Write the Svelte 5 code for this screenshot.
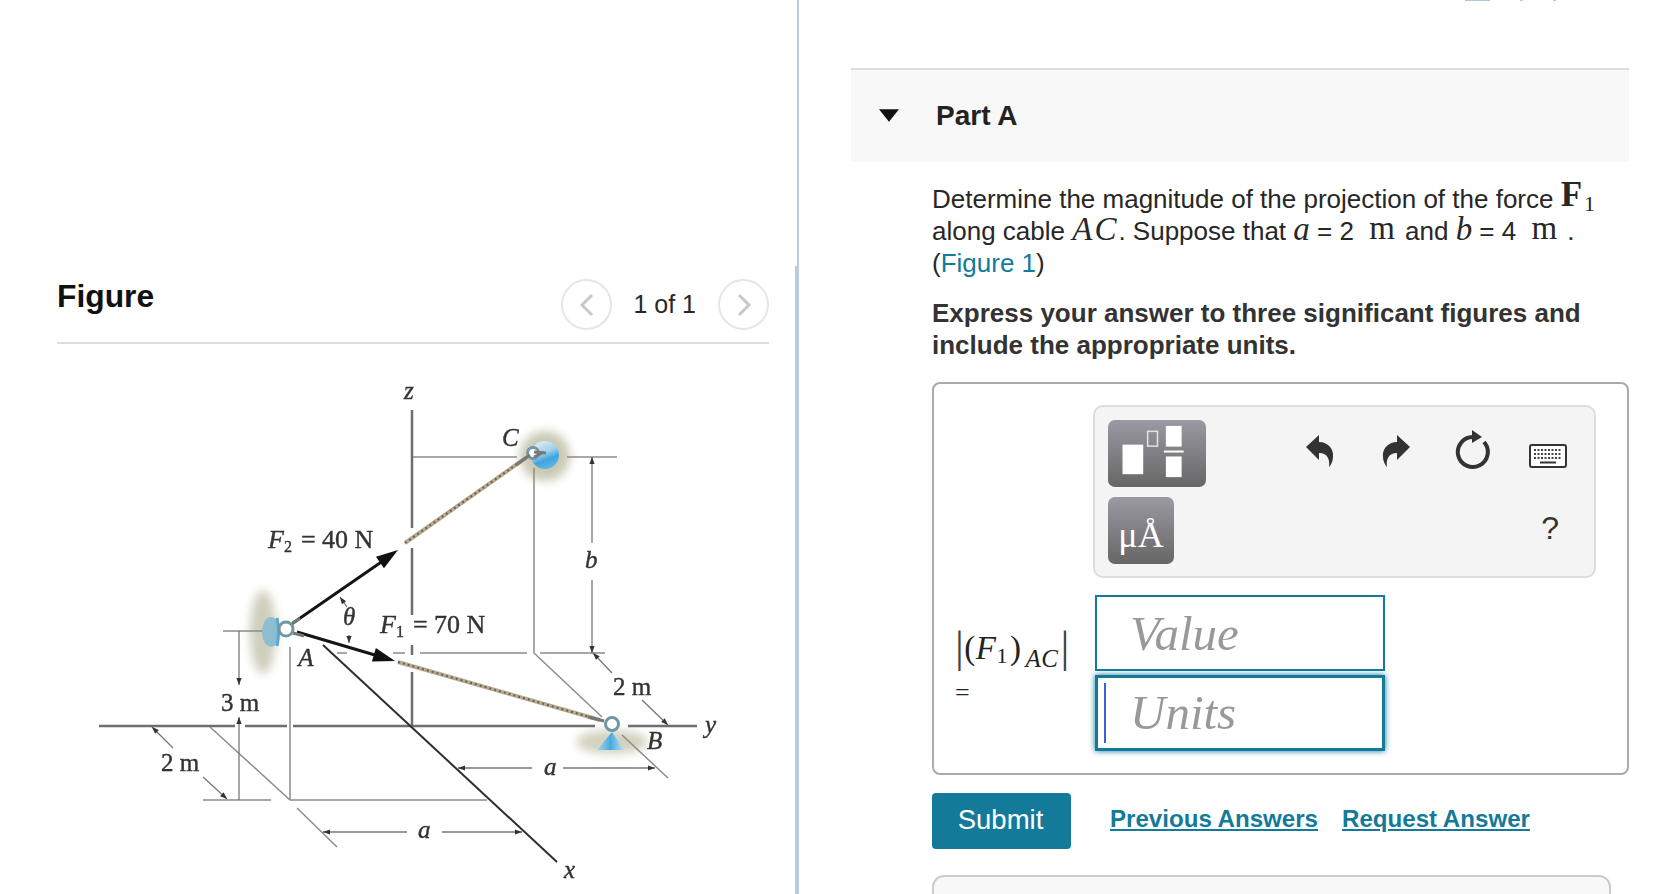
<script>
  const axis = [[412,410,412,528],[412,548,412,615],[412,645,412,655],[412,672,412,726],[99,726,235,726],[245,726,287,726],[293,726,595,726],[628,726,697,726]];
  const thin = [[412,457,517,457],[567,457,617,457],[534,468,534,653],[337,653,347,653],[393,653,405,653],[420,653,527,653],[540,653,605,653],[223,631,267,631],[290,647,290,800],[203,800,271,800],[290,800,487,800],[210,727,290,800],[297,808,337,847],[534,653,602,717],[622,735,668,778]];
  const dims = [[239,631,239,685],[239,800,239,717],[173,748,152,727],[203,777,227,799],[407,832,323,832],[442,832,522,832],[592,543,592,457],[592,580,592,653],[612,673,593,653],[642,700,668,725],[532,768,458,768],[563,768,655,768],[347,607,340,597],[349,635,349,643]];
  function head(l, len = 7, w = 2.6) {
    const [x1, y1, x2, y2] = l;
    const d = Math.hypot(x2 - x1, y2 - y1), ux = (x2 - x1) / d, uy = (y2 - y1) / d;
    const bx = x2 - ux * len, by = y2 - uy * len;
    return `${x2},${y2} ${bx - uy * w},${by + ux * w} ${bx + uy * w},${by - ux * w}`;
  }
  const seg = (l) => `M${l[0]} ${l[1]}L${l[2]} ${l[3]}`;
</script>

<div class="page">
  <section class="left">
    <header class="fig-head">
      <h2>Figure</h2>
      <nav class="pager">
        <span class="circle">
          <svg width="16" height="24" viewBox="0 0 16 24"><path d="M13 2 3 12l10 10" /></svg>
        </span>
        <span class="count">1 of 1</span>
        <span class="circle">
          <svg width="16" height="24" viewBox="0 0 16 24"><path d="m3 2 10 10L3 22" /></svg>
        </span>
      </nav>
    </header>
    <svg class="diagram" width="712" height="550" viewBox="57 344 712 550">
      <defs>
        <filter id="soft" x="-50%" y="-50%" width="200%" height="200%"><feGaussianBlur stdDeviation="5" /></filter>
        <linearGradient id="ball" x1="0.2" y1="0" x2="0.6" y2="1">
          <stop offset="0" stop-color="#e3f0f7" />
          <stop offset="0.45" stop-color="#9fd0ea" />
          <stop offset="0.7" stop-color="#3fa4dc" />
          <stop offset="1" stop-color="#63b6e2" />
        </linearGradient>
        <linearGradient id="cone" x1="0" y1="0" x2="1" y2="0">
          <stop offset="0" stop-color="#a9d6ee" />
          <stop offset="0.5" stop-color="#4aa9dc" />
          <stop offset="1" stop-color="#bfe0f2" />
        </linearGradient>
      </defs>
      <ellipse cx="263" cy="632" rx="13" ry="42" fill="#cfcfbe" filter="url(#soft)" />
      <circle cx="545" cy="456" r="25" fill="#c9c9b4" filter="url(#soft)" />
      <ellipse cx="612" cy="742" rx="36" ry="12" fill="#d2d2c0" filter="url(#soft)" />

      <path class="ln-thin" d={thin.map(seg).join('')} />
      <path class="ln-axis" d={axis.map(seg).join('')} />
      <path class="ln-x" d="M323 645 557 862" />
      <path class="ln-dim" d={dims.map(seg).join('')} />
      {#each dims as d}<polygon class="fill-dark" points={head(d)} />{/each}

      <path class="rope-a" d="M405 543 527 457M398 662 600 720" />
      <path class="rope-b" d="M405 543 527 457M398 662 600 720" />

      <path class="force" d="M293 623 390 556M297 632 385 658" />
      <polygon class="fill-black" points={head([293,623,398,550],22,7)} />
      <polygon class="fill-black" points={head([297,632,395,661],22,7)} />

      <ellipse cx="271" cy="632" rx="9" ry="15" fill="#8fbdd0" />
      <path d="M277 618q3 14 0 28" stroke="#5aa7cf" stroke-width="3" fill="none" />
      <circle cx="286" cy="629" r="7" class="ring" />
      <path class="shackle" d="M292 624 300 618M293 633 304 636" />

      <circle cx="545" cy="455" r="14" fill="url(#ball)" />
      <circle cx="533" cy="453" r="5.500" class="ring" />
      <path class="shackle" d="M516 465 530 455M534 452l12 1M534 457l10-5" />

      <circle cx="612" cy="724" r="6.500" class="ring" />
      <path class="shackle" d="M588 717 604 721" />
      <polygon points="612,732 597,750 624,750" fill="url(#cone)" />

      <text class="it" x="404" y="399">z</text>
      <text class="it" x="502" y="446">C</text>
      <text class="it" x="585" y="568">b</text>
      <text class="it" x="306" y="666" text-anchor="middle">A</text>
      <text class="it" x="647" y="749">B</text>
      <text class="it" x="705" y="733">y</text>
      <text class="it" x="564" y="878">x</text>
      <text class="it" x="418" y="838">a</text>
      <text class="it" x="544" y="775">a</text>
      <text class="it" x="343" y="625">θ</text>
      <text class="rm wide-t" x="268" y="548"><tspan class="itspan">F</tspan><tspan class="sub" dy="4">2</tspan><tspan dy="-4" dx="9">= 40 N</tspan></text>
      <text class="rm wide-t" x="380" y="633"><tspan class="itspan">F</tspan><tspan class="sub" dy="4">1</tspan><tspan dy="-4" dx="9">= 70 N</tspan></text>
      <text class="rm" x="240" y="711" text-anchor="middle">3 m</text>
      <text class="rm" x="180" y="771" text-anchor="middle">2 m</text>
      <text class="rm" x="632" y="695" text-anchor="middle">2 m</text>
    </svg>
  </section>

  <div class="divider"><i></i><b></b></div>

  <section class="right">
    <div class="topbits"><i class="w"></i><i></i><i></i></div>
    <div class="part">
      <svg width="20" height="13" viewBox="0 0 22 14"><polygon points="0,0 22,0 11,14" /></svg>
      <h3>Part A</h3>
    </div>
    <div class="body">
      <p class="q">Determine the magnitude of the projection of the force <span class="bf">F</span><span class="one">1</span><br />
        along cable <span class="ac">AC</span>. Suppose that <span class="mi">a</span> = 2 <span class="mu">m</span> and <span class="mi">b</span> = 4 <span class="mu">m</span> .<br />
        (<a href="#fig">Figure 1</a>)</p>
      <p class="ins">Express your answer to three significant figures and include the appropriate units.</p>

      <div class="box">
        <div class="toolbar">
          <div class="tool-left">
            <div class="tbtn wide">
              <svg width="98" height="67" viewBox="0 0 98 68">
                <rect class="wh" x="14" y="25" width="21" height="30" />
                <rect class="out" x="39.500" y="11.500" width="10" height="15" />
                <rect class="wh" x="58" y="6" width="16" height="21" />
                <rect class="wh" x="56" y="31" width="20" height="2" />
                <rect class="wh" x="58" y="37" width="16" height="21" />
              </svg>
            </div>
            <div class="tbtn sq">μÅ</div>
          </div>
          <div class="tool-right">
            <div class="tools-row">
              <svg class="ic" width="30" height="36" viewBox="0 0 30 36"><path d="M2 15 15 3v7c9 0 15 7 14 15 0 4-2 8-4 10 1-7-1-14-10-14v7z" /></svg>
              <svg class="ic" width="30" height="36" viewBox="0 0 30 36"><path d="M28 15 15 3v7C6 10 0 17 1 25c0 4 2 8 4 10-1-7 1-14 10-14v7z" /></svg>
              <svg class="ic" width="40" height="40" viewBox="0 0 40 40"><path class="rst" d="M20 7A15 15 0 1 0 31 12" /><polygon points="19,0 29,7 19,13" /></svg>
              <svg class="kb" width="38" height="24" viewBox="0 0 38 24">
                <rect x="1" y="1" width="36" height="22" rx="2" />
                <path class="kd" d="M5 6h28M5 10h28M5 14h28" />
                <path class="ks" d="M11 18.500h16" />
              </svg>
            </div>
            <div class="help">?</div>
          </div>
        </div>

        <div class="eq">
          <div class="math"><span class="bar">|</span>(<i>F</i><span class="s1">1</span><span class="rp">)</span><i class="sac">AC</i><span class="bar">|</span></div>
          <div class="equals">=</div>
        </div>
        <div class="inputs">
          <div class="field">Value</div>
          <div class="field focus"><span class="caret"></span>Units</div>
        </div>
      </div>

      <div class="actions">
        <button type="button">Submit</button>
        <a href="#prev">Previous Answers</a>
        <a href="#req">Request Answer</a>
      </div>

      <div class="next"></div>
    </div>
  </section>
</div>

<style>
  :global(body) { background: #fff; }
  .page {
    display: flex;
    height: 894px;
    overflow: hidden;
    font-family: "Liberation Sans", Arial, sans-serif;
    color: #272727;
  }
  .left { width: 712px; margin-left: 57px; margin-right: 26px; flex: none; }
  .fig-head {
    margin-top: 272px;
    height: 70px;
    border-bottom: 2px solid #ddd;
    display: flex;
    justify-content: space-between;
    align-items: flex-start;
  }
  h2 { margin: 6px 0 0; font-size: 31.800px; line-height: 36px; color: #111; }
  .pager { display: flex; align-items: center; margin-top: 7px; }
  .circle {
    width: 51px;
    height: 51px;
    box-sizing: border-box;
    border: 2px solid #e6e6e6;
    border-radius: 50%;
    display: flex;
    align-items: center;
    justify-content: center;
  }
  .circle path { fill: none; stroke: #c8c8c8; stroke-width: 3; }
  .count { font-size: 25px; margin: 0 22px 0 21px; }
  .diagram { display: block; filter: blur(0.6px); }
  .ln-thin { stroke: #8c8c8c; stroke-width: 1.500; fill: none; }
  .ln-axis { stroke: #6e6e6e; stroke-width: 2.500; fill: none; }
  .ln-x { stroke: #2e2e2e; stroke-width: 2; fill: none; }
  .ln-dim { stroke: #777; stroke-width: 1.300; fill: none; }
  .fill-dark { fill: #333; }
  .fill-black { fill: #111; }
  .force { stroke: #151515; stroke-width: 3; fill: none; }
  .rope-a { stroke: #b8ab94; stroke-width: 4; fill: none; }
  .rope-b { stroke: #6a5d4b; stroke-width: 2; stroke-dasharray: 2 3; fill: none; }
  .ring { fill: #fff; stroke: #6f97a6; stroke-width: 3; }
  .shackle { stroke: #777; stroke-width: 3; fill: none; }
  .diagram text { font-family: "Liberation Serif", serif; font-size: 25px; fill: #333; stroke: #333; stroke-width: 0.4px; }
  .diagram .it, .diagram .itspan { font-style: italic; }
  .diagram .sub { font-size: 16px; }
  .diagram .wide-t { font-size: 26px; }

  .divider { width: 4px; flex: none; display: flex; flex-direction: column; align-items: flex-end; }
  .divider i { width: 2px; height: 266px; background: #b9cde0; }
  .divider b { width: 4px; flex: 1; background: #b9cde0; }

  .right { width: 778px; margin-left: 52px; flex: none; }
  .topbits { height: 68px; display: flex; gap: 30px; padding-left: 614px; align-items: flex-start; }
  .topbits i { width: 3px; height: 1px; background: #a9d0d6; }
  .topbits i.w { width: 25px; background: #a6ccd8; }
  .part {
    height: 92px;
    box-sizing: content-box;
    border-top: 2px solid #ddd;
    background: #f8f8f8;
    display: flex;
    align-items: center;
    padding-left: 28px;
    gap: 37px;
  }
  .part svg { fill: #111; margin-top: -1px; }
  h3 { margin: 0; font-size: 28px; line-height: 32px; color: #222; }
  .body { padding-left: 81px; }
  .q { margin: 21px 0 0; font-size: 26px; line-height: 32px; }
  .q a { color: #147a9a; text-decoration: none; }
  .bf { font-family: "Liberation Serif", serif; font-weight: bold; font-size: 35px; line-height: 20px; vertical-align: 2px; }
  .one { font-family: "Liberation Serif", serif; font-size: 22px; line-height: 20px; vertical-align: -3px; margin-left: 2px; }
  .ac { font-family: "Liberation Serif", serif; font-style: italic; font-size: 33px; line-height: 20px; letter-spacing: 2px; }
  .mi { font-family: "Liberation Serif", serif; font-style: italic; font-size: 33px; line-height: 20px; }
  .mu { font-family: "Liberation Serif", serif; font-size: 33px; line-height: 20px; margin: 0 3px 0 8px; vertical-align: 1px; }
  .ins { margin: 18px 0 0; font-size: 26px; line-height: 32px; font-weight: bold; color: #333; }

  .box {
    margin-top: 21px;
    width: 697px;
    height: 393px;
    box-sizing: border-box;
    border: 2px solid #aaa;
    border-radius: 8px;
    padding: 21px 0 0 21px;
    display: grid;
    grid-template-columns: 138px 503px;
    grid-template-rows: 173px auto;
    row-gap: 17px;
  }
  .toolbar {
    grid-column: 2;
    box-sizing: border-box;
    background: #f4f4f4;
    border: 2px solid #ddd;
    border-radius: 10px;
    padding: 13px 0 0 13px;
    display: flex;
  }
  .tool-left { width: 196px; display: flex; flex-direction: column; gap: 10px; }
  .tbtn {
    background: linear-gradient(#9b99a2, #666);
    border-radius: 7px;
    color: #fff;
    display: flex;
    align-items: center;
    justify-content: center;
    flex: none;
  }
  .wide { width: 98px; height: 67px; }
  .sq {
    width: 66px;
    height: 67px;
    font-family: "Liberation Serif", serif;
    font-size: 36px;
    padding-top: 9px;
    box-sizing: border-box;
  }
  .wh { fill: #fff; }
  .out { fill: none; stroke: #e4e4e4; stroke-width: 1.500; }
  .tool-right { flex: 1; }
  .tools-row { display: flex; align-items: flex-start; height: 66px; padding-left: 0; }
  .ic { fill: #333; flex: none; }
  .ic:nth-child(1) { margin: 12px 48px 0 0; }
  .ic:nth-child(2) { margin: 12px 41px 0 0; }
  .ic:nth-child(3) { margin: 10px 36px 0 0; }
  .rst { fill: none; stroke: #333; stroke-width: 4; }
  .kb { margin-top: 24px; flex: none; }
  .kb rect { fill: #fff; stroke: #333; stroke-width: 2; }
  .kd { stroke: #444; stroke-width: 2; stroke-dasharray: 2 1.500; fill: none; }
  .ks { stroke: #333; stroke-width: 2; fill: none; }
  .help { text-align: right; padding-right: 35px; font-size: 32px; line-height: 36px; color: #333; margin-top: 24px; }

  .eq { grid-column: 1; font-family: "Liberation Serif", serif; color: #222; }
  .math { font-size: 33px; line-height: 48px; margin-top: 29px; white-space: nowrap; letter-spacing: 0.5px; }
  .bar { font-size: 44px; font-weight: 100; vertical-align: -3px; color: #444; }
  .s1 { font-size: 22px; vertical-align: -4px; }
  .rp { margin-left: 2px; }
  .sac { font-size: 25px; vertical-align: -8px; margin: 0 2px 0 4px; }
  .equals { font-size: 26px; line-height: 24px; margin-top: -2px; }
  .inputs { grid-column: 2; display: flex; flex-direction: column; gap: 4px; width: 290px; margin-left: 2px; }
  .field {
    height: 76px;
    box-sizing: border-box;
    border: 2px solid #147a9a;
    padding-left: 33px;
    padding-top: 2px;
    font-family: "Liberation Serif", serif;
    font-style: italic;
    font-size: 49px;
    line-height: 72px;
    color: #999;
    display: flex;
    align-items: center;
  }
  .focus { border-width: 3px; box-shadow: 0 0 6px #147a9a; padding-left: 6px; padding-top: 0; }
  .caret { width: 2px; height: 60px; background: #3b5fd8; margin-right: 24px; flex: none; }
  .actions { margin-top: 18px; display: flex; align-items: center; height: 56px; }
  .actions button {
    width: 139px;
    height: 56px;
    border: 0;
    border-radius: 4px;
    background: #147a9a;
    color: #fff;
    font: 27.500px "Liberation Sans", Arial, sans-serif;
    padding: 0 2px 3px 0;
  }
  .actions a { color: #147a9a; font-weight: bold; font-size: 24.100px; margin-left: 39px; margin-top: -4px; }
  .actions a + a { margin-left: 24px; }
  .next {
    margin-top: 26px;
    width: 679px;
    height: 60px;
    box-sizing: border-box;
    border: 2px solid #ccc;
    border-radius: 12px;
    background: #f8f8f8;
  }
</style>
